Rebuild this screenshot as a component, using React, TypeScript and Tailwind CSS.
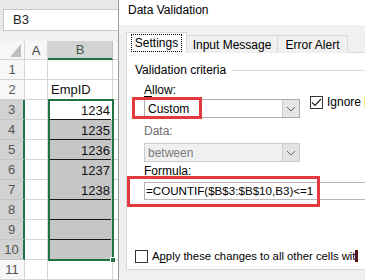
import React from "react";

const rows = [1, 2, 3, 4, 5, 6, 7, 8, 9, 10, 11];
const bValues: Record<number, string> = {
  2: "EmpID",
  3: "1234",
  4: "1235",
  5: "1236",
  6: "1237",
  7: "1238",
};
const lineBelow = new Set([3, 4, 5, 7, 8, 9]);

function Chevron({ color = "#606060" }: { color?: string }) {
  return (
    <svg width="10" height="6" viewBox="0 0 10 6" fill="none">
      <path d="M1 1l4 4 4-4" stroke={color} strokeWidth="1" />
    </svg>
  );
}

function Sheet() {
  return (
    <div className="flex w-[118px] shrink-0 flex-col bg-[#e9e9e9]">
      <div className="h-[10px]" />
      <div className="ml-[3px] flex h-[24px] items-center border border-r-0 border-[#c8c8c8] bg-white pl-[9px] text-[13px] text-[#222]">
        B3
      </div>
      <div className="h-[11px] bg-[#f1f1f1]" />
      <div className="relative grid grid-cols-[25px_23px_65px_5px] grid-rows-[19px] auto-rows-[20px] bg-white text-[13px] leading-none">
        {/* header row */}
        <div className="relative border-r border-b border-[#d4d4d4] bg-[#f7f7f7]">
          <svg className="absolute right-[3px] bottom-[2px]" width="11" height="13" viewBox="0 0 11 13">
            <polygon points="11,0 11,13 0,13" fill="#bdbdbd" />
          </svg>
        </div>
        <div className="flex items-center justify-center border-r border-b border-[#d4d4d4] bg-[#f7f7f7] text-[#444]">
          A
        </div>
        <div className="flex items-center justify-center border-r border-b-2 border-r-[#c4c4c4] border-b-[#217346] bg-[#d3d3d3] text-[#3d5a47]">
          B
        </div>
        <div className="border-b border-[#d4d4d4] bg-[#f7f7f7]" />

        {rows.map((r) => {
          const sel = r >= 3 && r <= 10;
          const val = bValues[r];
          const numeric = val !== undefined && r >= 3;
          return (
            <React.Fragment key={r}>
              <div
                className={
                  sel
                    ? "flex items-center justify-center border-b border-r-2 border-b-[#c4c4c4] border-r-[#217346] bg-[#d2d2d2] text-[#555]"
                    : "flex items-center justify-center border-b border-r border-[#d4d4d4] bg-[#f7f7f7] text-[#555]"
                }
              >
                {r}
              </div>
              <div className="border-r border-b border-[#d4d4d4]" />
              <div
                className={
                  (sel ? (r === 3 ? "bg-white " : "bg-[#c6c6c6] ") : "border-r border-b border-[#d4d4d4] ") +
                  "relative flex items-center px-[3px] text-[#111] " +
                  (numeric ? "justify-end" : "justify-start")
                }
              >
                {val}
                {lineBelow.has(r) && (
                  <div className="absolute right-[2px] bottom-0 left-[2px] h-px bg-[#1a1a1a]" />
                )}
              </div>
              <div className="border-b border-[#d4d4d4]" />
            </React.Fragment>
          );
        })}

        {/* selection outline */}
        <div className="pointer-events-none absolute top-[58px] left-[48px] h-[162px] w-[66px] border-2 border-[#217346]">
          <div className="absolute -right-[4px] -bottom-[4px] h-[6px] w-[6px] border border-white bg-[#217346]" />
        </div>
      </div>
    </div>
  );
}

function Dialog() {
  return (
    <div className="flex flex-1 flex-col border-l border-[#9a9a9a] bg-[#f0f0f0] text-[12px] leading-[14px] text-black">
      <div className="h-[25px] bg-white pt-[3px] pl-[9px] text-[12px]">Data Validation</div>

      <div className="pt-[7px] pl-[7px]">
        <div className="relative z-10 -mb-px flex h-[21px] items-end">
          <div className="flex h-[21px] w-[61px] items-center justify-center border border-b-0 border-[#d9d9d9] bg-white">
            <span className="border border-dotted border-black px-[3px] py-[1px]">Settings</span>
          </div>
          <div className="flex h-[18px] w-[91px] items-center justify-center border-t border-r border-[#d9d9d9] bg-[#f0f0f0]">
            Input Message
          </div>
          <div className="flex h-[18px] w-[70px] items-center justify-center border-t border-r border-[#d9d9d9] bg-[#f0f0f0]">
            Error Alert
          </div>
        </div>

        <div className="relative flex h-[218px] flex-col border border-r-0 border-[#d9d9d9] bg-white">
          <div className="mt-[10px] flex items-center pl-[8px]">
            <span>Validation criteria</span>
            <div className="ml-[6px] h-px flex-1 bg-[#dcdcdc]" />
          </div>

          <div className="mt-[6px] pl-[17px]">
            <span className="underline underline-offset-2">A</span>llow:
          </div>

          <div className="mt-[2px] flex items-start pl-[17px]">
            <div className="flex h-[19px] w-[156px] border border-[#adadad] bg-white">
              <div className="flex flex-1 items-center pl-[3px]">Custom</div>
              <div className="flex w-[17px] items-center justify-center border-l border-[#c8c8c8] bg-[#e5e5e5]">
                <Chevron />
              </div>
            </div>
            <div className="-mt-[4px] ml-[10px] flex items-center">
              <div className="flex h-[13px] w-[13px] items-center justify-center border border-[#333] bg-white">
                <svg width="11" height="9" viewBox="0 0 11 9" fill="none">
                  <path d="M1 4.5l3 3 6-6.5" stroke="#222" strokeWidth="1.2" />
                </svg>
              </div>
              <span className="ml-[4px]">Ignore</span>
              <span className="ml-[3px] h-[11px] w-[6px] bg-[#f7f27a]" />
            </div>
          </div>

          <div className="mt-[6px] pl-[17px] text-[#6d6d6d]">Data:</div>

          <div className="mt-[5px] pl-[17px]">
            <div className="flex h-[19px] w-[156px] border border-[#cccccc] bg-[#f0f0f0]">
              <div className="flex flex-1 items-center pl-[3px] text-[#7a7a7a]">between</div>
              <div className="flex w-[17px] items-center justify-center border-l border-[#cccccc] bg-[#e3e3e3]">
                <Chevron color="#6a6a6a" />
              </div>
            </div>
          </div>

          <div className="mt-[2px] pl-[17px]">Formula:</div>

          <div className="mt-[4px] ml-[17px] flex h-[18px] items-center border border-r-0 border-[#b4b4b4] bg-white pl-[1px] text-[11.6px]">
            =COUNTIF($B$3:$B$10,B3)&lt;=1
          </div>

          <div className="mt-[49px] flex items-center pl-[8px]">
            <div className="h-[13px] w-[13px] shrink-0 border border-[#333] bg-white" />
            <span className="ml-[4px] text-[11.3px] whitespace-nowrap">
              A<span className="underline underline-offset-2">p</span>ply these changes to all other cells wit
            </span>
            <span className="h-[12px] w-[3px] shrink-0 bg-[#5a1420]" />
          </div>

          {/* annotation boxes */}
          <div className="pointer-events-none absolute top-[44px] left-[5px] h-[22px] w-[70px] border-[3px] border-[#e2393f]" />
          <div className="pointer-events-none absolute top-[123px] left-0 h-[31px] w-[193px] border-[3px] border-[#e2393f]" />
        </div>
      </div>
    </div>
  );
}

export default function App() {
  return (
    <div className="relative flex h-[280px] w-[365px] overflow-hidden bg-[#f0f0f0] font-['Liberation_Sans',Arial,sans-serif]">
      <Sheet />
      <Dialog />
    </div>
  );
}
